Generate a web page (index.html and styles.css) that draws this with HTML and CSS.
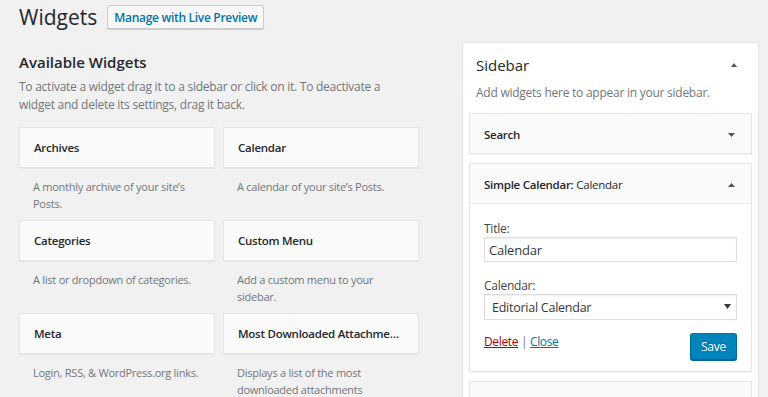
FILE: index.html
```html
<!DOCTYPE html>
<html lang="en">
<head>
<meta charset="utf-8">
<title>Widgets</title>
<link rel="stylesheet" href="styles.css">
</head>
<body>
<div class="page">
  <header class="page-head">
    <h1 class="page-title">Widgets</h1>
    <a class="btn-secondary" href="#">Manage with Live Preview</a>
  </header>
  <div class="columns">
    <section class="available">
      <h2 class="section-title">Available Widgets</h2>
      <p class="section-desc">To activate a widget drag it to a sidebar or click on it. To deactivate a widget and delete its settings, drag it back.</p>
      <div class="widget-grid">
        <div class="widget-item">
          <div class="widget-top">Archives</div>
          <p class="widget-desc">A monthly archive of your site’s Posts.</p>
        </div>
        <div class="widget-item">
          <div class="widget-top">Calendar</div>
          <p class="widget-desc">A calendar of your site’s Posts.</p>
        </div>
        <div class="widget-item">
          <div class="widget-top">Categories</div>
          <p class="widget-desc">A list or dropdown of categories.</p>
        </div>
        <div class="widget-item">
          <div class="widget-top">Custom Menu</div>
          <p class="widget-desc">Add a custom menu to your sidebar.</p>
        </div>
        <div class="widget-item">
          <div class="widget-top">Meta</div>
          <p class="widget-desc">Login, RSS, &amp; WordPress.org links.</p>
        </div>
        <div class="widget-item">
          <div class="widget-top">Most Downloaded Attachments</div>
          <p class="widget-desc">Displays a list of the most downloaded attachments</p>
        </div>
      </div>
    </section>

    <aside class="sidebar">
      <div class="sidebar-head">
        <h2 class="sidebar-title">Sidebar</h2>
        <svg class="arrow" width="6" height="4" viewBox="0 0 6 4"><polygon points="0,4 3,0 6,4" /></svg>
      </div>
      <p class="sidebar-desc">Add widgets here to appear in your sidebar.</p>

      <div class="sb-widget">
        <div class="sb-widget-top">
          <span>Search</span>
          <svg class="arrow" width="7" height="4" viewBox="0 0 7 4"><polygon points="0,0 7,0 3.5,4" /></svg>
        </div>
      </div>

      <div class="sb-widget">
        <div class="sb-widget-top">
          <span>Simple Calendar:<span class="in-title"> Calendar</span></span>
          <svg class="arrow" width="7" height="4" viewBox="0 0 7 4"><polygon points="0,4 3.5,0 7,4" /></svg>
        </div>
        <div class="sb-widget-inside">
          <div class="field">
            <label class="field-label" for="w-title">Title:</label>
            <input class="text-input" id="w-title" type="text" value="Calendar">
          </div>
          <div class="field">
            <label class="field-label" for="w-cal">Calendar:</label>
            <div class="select-wrap">
              <select class="select-input" id="w-cal">
                <option>Editorial Calendar</option>
              </select>
              <svg class="select-arrow" width="7" height="5" viewBox="0 0 7 5"><polygon points="0,0 7,0 3.5,5" /></svg>
            </div>
          </div>
          <div class="widget-actions">
            <div class="links"><a class="link-delete" href="#">Delete</a> <span class="sep">|</span> <a class="link-close" href="#">Close</a></div>
            <button class="btn-primary" type="button">Save</button>
          </div>
        </div>
      </div>

      <div class="sb-widget">
        <div class="sb-widget-top"></div>
      </div>
    </aside>
  </div>
</div>
</body>
</html>
```

FILE: styles.css
```css
html, body {
  height: 100%;
  overflow: hidden;
}

body {
  margin: 0;
  background: #f1f1f1;
  font-family: "Open Sans", "Noto Sans", sans-serif;
  font-size: 12px;
  letter-spacing: -0.25px;
  color: #444;
}

.page {
  padding-left: 19px;
}

.page-head {
  display: flex;
  align-items: center;
  gap: 10px;
  height: 34px;
}

.page-title {
  margin: 0;
  font-size: 21px;
  font-weight: 400;
  line-height: 28px;
  letter-spacing: 0;
  color: #23282d;
}

.btn-secondary {
  display: inline-flex;
  align-items: center;
  height: 24px;
  box-sizing: border-box;
  padding: 0 6px;
  border: 1px solid #ccc;
  border-radius: 2px;
  background: #f7f7f7;
  box-shadow: 0 1px 0 #ccc;
  color: #0073aa;
  font-weight: 600;
  font-size: 12px;
  letter-spacing: -0.3px;
  text-decoration: none;
}

.columns {
  display: flex;
  align-items: flex-start;
}

.available {
  width: 400px;
}

.section-title {
  margin: 18px 0 0;
  font-size: 15px;
  font-weight: 600;
  line-height: 20px;
  letter-spacing: 0;
  color: #23282d;
}

.section-desc {
  max-width: 390px;
  margin: 6px 0 0;
  line-height: 18px;
  color: #72777c;
}

.widget-grid {
  display: grid;
  grid-template-columns: 196px 196px;
  column-gap: 8px;
  margin-top: 13px;
}

.widget-item {
  height: 93px;
}

.widget-top {
  height: 41px;
  box-sizing: border-box;
  border: 1px solid #e5e5e5;
  background: #fafafa;
  box-shadow: 0 1px 1px rgba(0, 0, 0, 0.04);
  padding: 1px 14px 0;
  line-height: 38px;
  font-size: 11.5px;
  font-weight: 600;
  color: #23282d;
  white-space: nowrap;
  overflow: hidden;
  text-overflow: ellipsis;
}

.widget-desc {
  margin: 0;
  padding: 10px 14px 0;
  line-height: 17px;
  font-size: 11px;
  color: #72777c;
}

.sidebar {
  width: 297px;
  height: 400px;
  box-sizing: border-box;
  margin: 8px 0 0 43px;
  padding: 0 6px;
  background: #fff;
  border: 1px solid #e5e5e5;
  box-shadow: 0 1px 1px rgba(0, 0, 0, 0.04);
}

.sidebar-head {
  display: flex;
  align-items: center;
  justify-content: space-between;
  padding: 12px 15px 0 7px;
}

.sidebar-title {
  margin: 0;
  font-size: 15px;
  font-weight: 400;
  line-height: 20px;
  letter-spacing: 0;
  color: #23282d;
}

.arrow {
  display: block;
  fill: #50575e;
}

.sidebar-desc {
  margin: 9px 0 0;
  padding-left: 7px;
  line-height: 18px;
  color: #72777c;
}

.sb-widget {
  margin-top: 9px;
  border: 1px solid #e5e5e5;
  background: #fafafa;
  box-shadow: 0 1px 1px rgba(0, 0, 0, 0.04);
}

.sidebar-desc + .sb-widget {
  margin-top: 11px;
}

.sb-widget-top {
  height: 39px;
  box-sizing: border-box;
  display: flex;
  align-items: center;
  justify-content: space-between;
  padding: 2px 16px 0 14px;
  font-size: 11.5px;
  font-weight: 600;
  color: #23282d;
}

.in-title {
  font-weight: 400;
}

.sb-widget-inside {
  background: #fff;
  border-top: 1px solid #eee;
  padding: 16px 14px 11px;
}

.field + .field {
  margin-top: 15px;
}

.field-label {
  display: block;
  line-height: 17px;
  color: #444;
}

.text-input,
.select-input {
  display: block;
  width: 100%;
  box-sizing: border-box;
  margin: 0;
  border: 1px solid #ddd;
  box-shadow: inset 0 1px 2px rgba(0, 0, 0, 0.07);
  background: #fff;
  font-family: inherit;
  font-size: 13px;
  letter-spacing: -0.2px;
  color: #32373c;
  outline: none;
}

.text-input {
  height: 25px;
  padding: 0 4px;
}

.select-wrap {
  position: relative;
}

.select-input {
  height: 26px;
  padding: 0 24px 0 7px;
  font-size: 12.5px;
  letter-spacing: -0.25px;
  appearance: none;
  -webkit-appearance: none;
  border-radius: 0;
}

.select-arrow {
  position: absolute;
  right: 6px;
  top: 10px;
  fill: #32373c;
}

.widget-actions {
  display: flex;
  justify-content: space-between;
  align-items: flex-start;
  margin-top: 13px;
}

.links {
  line-height: 17px;
  letter-spacing: -0.35px;
}

.link-delete {
  color: #a00;
}

.link-close {
  color: #0073aa;
}

.sep {
  color: #72777c;
}

.btn-primary {
  height: 27px;
  padding: 0 10px;
  border: 1px solid #0073aa;
  border-color: #0073aa #006799 #006799;
  border-radius: 3px;
  background: #0085ba;
  box-shadow: 0 1px 0 #006799;
  color: #fff;
  font-family: inherit;
  font-size: 12px;
  letter-spacing: -0.25px;
  text-shadow: 0 -1px 1px #006799;
}
```
